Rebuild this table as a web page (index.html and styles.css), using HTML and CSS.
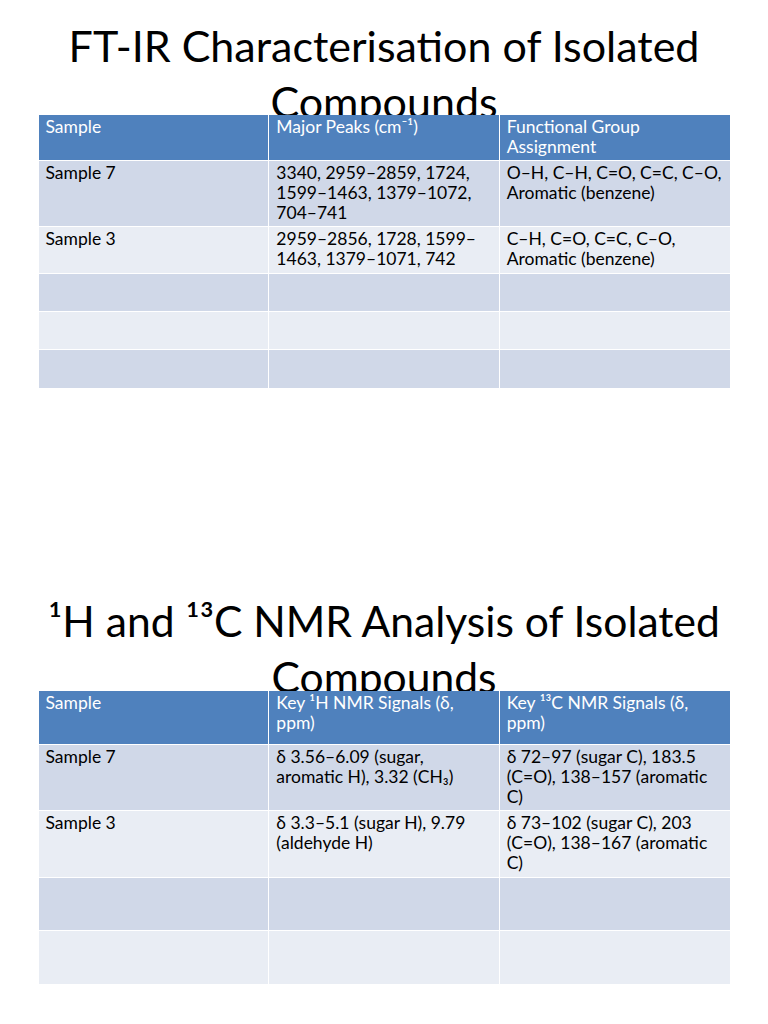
FILE: index.html
```html
<!DOCTYPE html>
<html lang="en">
<head>
<meta charset="utf-8">
<title>FT-IR and NMR Characterisation</title>
<link rel="stylesheet" href="styles.css">
</head>
<body>
<section class="slide slide-ir">
  <h1 class="title">FT-IR Characterisation of Isolated Compounds</h1>
  <table class="grid">
    <tr class="head h45">
      <td>Sample</td>
      <td>Major Peaks (cm⁻¹)</td>
      <td>Functional Group Assignment</td>
    </tr>
    <tr class="odd h65">
      <td>Sample 7</td>
      <td>3340, 2959–2859, 1724, 1599–1463, 1379–1072, 704–741</td>
      <td>O–H, C–H, C=O, C=C, C–O, Aromatic (benzene)</td>
    </tr>
    <tr class="even h47">
      <td>Sample 3</td>
      <td>2959–2856, 1728, 1599–1463, 1379–1071, 742</td>
      <td>C–H, C=O, C=C, C–O, Aromatic (benzene)</td>
    </tr>
    <tr class="odd h38"><td></td><td></td><td></td></tr>
    <tr class="even h38"><td></td><td></td><td></td></tr>
    <tr class="odd h38"><td></td><td></td><td></td></tr>
  </table>
</section>
<section class="slide slide-nmr">
  <h1 class="title">¹H and ¹³C NMR Analysis of Isolated Compounds</h1>
  <table class="grid">
    <tr class="head h54">
      <td>Sample</td>
      <td>Key ¹H NMR Signals (δ, ppm)</td>
      <td>Key ¹³C NMR Signals (δ, ppm)</td>
    </tr>
    <tr class="odd h65">
      <td>Sample 7</td>
      <td>δ 3.56–6.09 (sugar, aromatic H), 3.32 (CH₃)</td>
      <td>δ 72–97 (sugar C), 183.5 (C=O), 138–157 (aromatic C)</td>
    </tr>
    <tr class="even h67">
      <td>Sample 3</td>
      <td>δ 3.3–5.1 (sugar H), 9.79 (aldehyde H)</td>
      <td>δ 73–102 (sugar C), 203 (C=O), 138–167 (aromatic C)</td>
    </tr>
    <tr class="odd h53"><td></td><td></td><td></td></tr>
    <tr class="even h53"><td></td><td></td><td></td></tr>
  </table>
</section>
</body>
</html>
```
FILE: styles.css
```css
html, body {
  margin: 0;
  padding: 0;
  background: #ffffff;
}
body {
  font-family: Lato, "Liberation Sans", sans-serif;
  color: #000;
}
.slide {
  display: flex;
  flex-direction: column;
  align-items: center;
}
.slide-ir {
  padding-top: 18px;
}
.slide-nmr {
  padding-top: 205px;
}
.title {
  margin: 0;
  width: 720px;
  font-weight: 400;
  font-size: 43px;
  line-height: 56px;
  text-align: center;
  height: 97px;
}
.slide-nmr .title {
  font-size: 42.6px;
  height: 98px;
}
.grid {
  position: relative;
  border-collapse: collapse;
  table-layout: fixed;
  width: 691px;
  font-size: 17.5px;
  line-height: 20px;
}
.grid td {
  box-sizing: border-box;
  border: 1px solid #ffffff;
  padding: 2px 7px 3px 7px;
  vertical-align: top;
}
.grid tr:first-child td {
  border-top: none;
}
.grid tr:last-child td {
  border-bottom: none;
}
.grid td:first-child {
  border-left: none;
}
.grid td:last-child {
  border-right: none;
}
.head td {
  background: #4f81bd;
  color: #ffffff;
}
.odd td {
  background: #d0d8e8;
}
.even td {
  background: #e9edf4;
}
.h38 td { height: 38px; }
.h45 td { height: 45px; }
.h47 td { height: 47px; }
.h53 td { height: 53px; }
.h54 td { height: 54px; }
.h65 td { height: 65px; }
.h67 td { height: 67px; }
```
